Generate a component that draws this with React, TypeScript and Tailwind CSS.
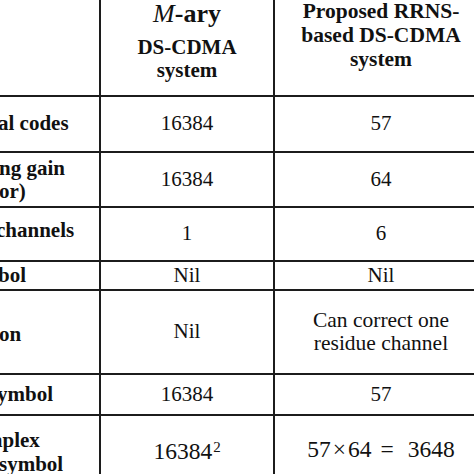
import React from 'react';

type Row = {
  h: string;
  left: React.ReactNode;
  mid: React.ReactNode;
  right: React.ReactNode;
};

const line = 'border-[#1c1c1c]';

const rows: Row[] = [
  {
    h: 'h-[56px]',
    left: <div className="-ml-[2px]">al codes</div>,
    mid: '16384',
    right: '57',
  },
  {
    h: 'h-[55px]',
    left: (
      <div className="leading-[23px]">
        <div className="-ml-[1px]">ng gain</div>
        <div className="-ml-[1px]">or)</div>
      </div>
    ),
    mid: '16384',
    right: '64',
  },
  {
    h: 'h-[54px]',
    left: <div className="-ml-[4px] pb-[6px]">channels</div>,
    mid: '1',
    right: '6',
  },
  {
    h: 'h-[29px]',
    left: <div className="-ml-[2px]">bol</div>,
    mid: 'Nil',
    right: 'Nil',
  },
  {
    h: 'h-[84px]',
    left: <div className="-ml-[1px] pt-[6px]">on</div>,
    mid: 'Nil',
    right: (
      <div className="leading-[23px] text-[21.5px]">
        <div>Can correct one</div>
        <div>residue channel</div>
      </div>
    ),
  },
  {
    h: 'h-[41px]',
    left: <div className="-ml-[3px]">ymbol</div>,
    mid: '16384',
    right: '57',
  },
  {
    h: 'h-[80px]',
    left: (
      <div className="leading-[24px] pb-[6px]">
        <div className="-ml-[15px]">mplex</div>
        <div className="-ml-[1px]">symbol</div>
      </div>
    ),
    mid: (
      <div className="text-[23.5px] pb-[6px]">
        16384<sup className="text-[15px] ml-[1px]">2</sup>
      </div>
    ),
    right: (
      <div className="flex items-center text-[23.5px] pb-[10px]">
        <span>57</span>
        <span className="mx-[2px]">×</span>
        <span>64</span>
        <span className="ml-[9px] mr-[14px]">=</span>
        <span>3648</span>
      </div>
    ),
  },
];

export default function App() {
  return (
    <div className="w-[474px] h-[474px] overflow-hidden bg-white text-[#111] font-['Liberation_Serif',serif]">
      <div className="grid grid-cols-[101px_174px_212px] w-[487px]">
        {/* header */}
        <div className={`h-[97px] border-r-2 border-b-2 ${line}`} />
        <div className={`h-[97px] border-r-2 border-b-2 ${line} flex flex-col items-center font-bold`}>
          <div className="text-[26px] leading-[28px]">
            <span className="italic font-normal">M</span>
            <span>-ary</span>
          </div>
          <div className="mt-[8px] text-[21px] leading-[23px]">DS-CDMA</div>
          <div className="text-[21px] leading-[23px]">system</div>
        </div>
        <div className={`h-[97px] border-b-2 ${line} flex flex-col items-center font-bold text-[21.5px] leading-[24px]`}>
          <div className="-mt-[1px]">Proposed RRNS-</div>
          <div>based DS-CDMA</div>
          <div>system</div>
        </div>

        {rows.map((r, i) => (
          <React.Fragment key={i}>
            <div
              className={`${r.h} border-r-2 border-b-2 ${line} overflow-hidden flex items-center whitespace-nowrap font-bold text-[21px]`}
            >
              {r.left}
            </div>
            <div
              className={`${r.h} border-r-2 border-b-2 ${line} flex items-center justify-center text-center text-[21px]`}
            >
              {r.mid}
            </div>
            <div
              className={`${r.h} border-b-2 ${line} flex items-center justify-center text-center text-[21px]`}
            >
              {r.right}
            </div>
          </React.Fragment>
        ))}
      </div>
    </div>
  );
}
